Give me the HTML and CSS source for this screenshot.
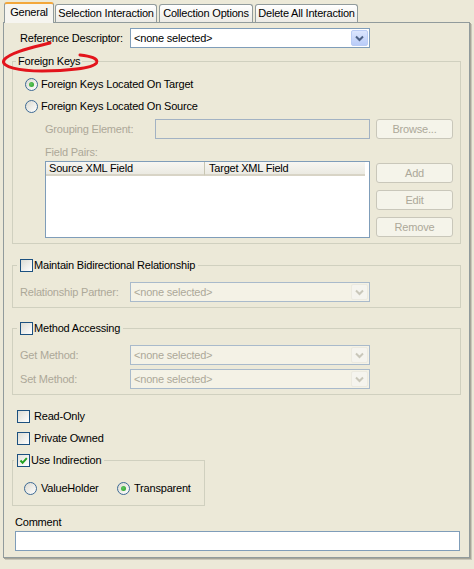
FILE: index.html
```html
<!DOCTYPE html>
<html>
<head>
<meta charset="utf-8">
<title>Mapping - General</title>
<link rel="stylesheet" href="styles.css">
</head>
<body>
<div class="window">
  <div class="tabs">
    <div class="tab active">General</div>
    <div class="tab t-sel">Selection Interaction</div>
    <div class="tab t-col">Collection Options</div>
    <div class="tab t-del">Delete All Interaction</div>
  </div>

  <div class="panel">
    <div class="ref-row">
      <span class="lbl w110">Reference Descriptor:</span>
      <div class="combo w240">
        <span class="val">&lt;none selected&gt;</span>
        <span class="drop"><svg viewBox="0 0 15 16" width="15" height="16"><path d="M4 6.5 L7.5 10 L11 6.5" fill="none" stroke="#4D6185" stroke-width="2"/></svg></span>
      </div>
    </div>

    <fieldset class="grp fk">
      <legend class="grp-title">Foreign Keys</legend>
      <div class="fk-body">
        <div class="opt"><span class="radio on"></span>Foreign Keys Located On Target</div>
        <div class="opt gap6"><span class="radio"></span>Foreign Keys Located On Source</div>
        <div class="fk-grid">
          <div class="grouping">
            <span class="lbl dis w110">Grouping Element:</span>
            <div class="field dis"></div>
          </div>
          <div class="btn dis">Browse...</div>
          <div class="pairs">
            <div class="lbl dis">Field Pairs:</div>
            <div class="table">
              <div class="thead">
                <div class="th c1">Source XML Field</div>
                <div class="th c2">Target XML Field</div>
              </div>
            </div>
          </div>
          <div class="btn-col">
            <div class="btn dis">Add</div>
            <div class="btn dis">Edit</div>
            <div class="btn dis">Remove</div>
          </div>
        </div>
      </div>
    </fieldset>

    <fieldset class="grp bidi">
      <legend class="chk-title"><span class="check"></span>Maintain Bidirectional Relationship</legend>
      <div class="sub-body">
        <div class="form-row">
          <span class="lbl dis w110">Relationship Partner:</span>
          <div class="combo dis w240">
            <span class="val">&lt;none selected&gt;</span>
            <span class="drop"><svg viewBox="0 0 15 16" width="15" height="16"><path d="M4 6.5 L7.5 10 L11 6.5" fill="none" stroke="#C9C7BA" stroke-width="2"/></svg></span>
          </div>
        </div>
      </div>
    </fieldset>

    <fieldset class="grp meth">
      <legend class="chk-title"><span class="check"></span>Method Accessing</legend>
      <div class="sub-body">
        <div class="form-row">
          <span class="lbl dis w110">Get Method:</span>
          <div class="combo dis w240">
            <span class="val">&lt;none selected&gt;</span>
            <span class="drop"><svg viewBox="0 0 15 16" width="15" height="16"><path d="M4 6.5 L7.5 10 L11 6.5" fill="none" stroke="#C9C7BA" stroke-width="2"/></svg></span>
          </div>
        </div>
        <div class="form-row gap4">
          <span class="lbl dis w110">Set Method:</span>
          <div class="combo dis w240">
            <span class="val">&lt;none selected&gt;</span>
            <span class="drop"><svg viewBox="0 0 15 16" width="15" height="16"><path d="M4 6.5 L7.5 10 L11 6.5" fill="none" stroke="#C9C7BA" stroke-width="2"/></svg></span>
          </div>
        </div>
      </div>
    </fieldset>

    <div class="chk-row first"><span class="check"></span>Read-Only</div>
    <div class="chk-row"><span class="check"></span>Private Owned</div>

    <fieldset class="grp indir">
      <legend class="chk-title"><span class="check on"><svg viewBox="0 0 11 11" width="11" height="11"><path d="M2.5 5.5 L4.6 7.8 L8.8 3.2" fill="none" stroke="#21A121" stroke-width="2"/></svg></span>Use Indirection</legend>
      <div class="indir-body">
        <div class="ropt w93"><span class="radio"></span>ValueHolder</div>
        <div class="ropt"><span class="radio on"></span>Transparent</div>
      </div>
    </fieldset>

    <div class="comment-lbl">Comment</div>
    <div class="comment-field"></div>
  </div>

  <svg class="annot" viewBox="0 0 110 80" width="110" height="80"><path d="M50 43 C 35 47, 10 52, 4 60 C 0 67, 20 71, 42 71 C 65 71, 93 68.5, 96.5 63 C 99 58.5, 90 56, 80 55" fill="none" stroke="#E3141C" stroke-width="3" stroke-linecap="round"/></svg>
</div>
</body>
</html>
```

FILE: styles.css
```css
* { box-sizing: border-box; }

html, body {
  margin: 0;
  padding: 0;
  background: #ECE9D8;
}

body {
  font-family: "Liberation Sans", Arial, sans-serif;
  font-size: 11px;
  line-height: 13px;
  letter-spacing: -0.2px;
  color: #000;
}

.window {
  position: relative;
  width: 474px;
  height: 569px;
  overflow: hidden;
}

/* Tabs */
.tabs {
  display: flex;
  align-items: flex-end;
  height: 22px;
  padding-left: 4px;
  gap: 2px;
  position: relative;
  z-index: 2;
}

.tab {
  height: 18px;
  border: 1px solid #919B9C;
  border-bottom: none;
  border-radius: 3px 3px 0 0;
  background: linear-gradient(#FFFFFF, #ECEBE5);
  line-height: 17px;
  text-align: center;
  white-space: nowrap;
}

.tab.active {
  width: 50px;
  height: 21px;
  margin-bottom: -1px;
  margin-right: -1px;
  border-top: 2px solid #F3A73A;
  background: #F6F5F0;
  line-height: 17px;
}

.t-sel { width: 102px; }
.t-col { width: 94px; }
.t-del { width: 103px; }

/* Panel */
.panel {
  margin-left: 3px;
  width: 467px;
  height: 536px;
  border: 1px solid #919B9C;
  box-shadow: 1px 1px 0 #A6A598, 2px 2px 0 #C9C7BA;
  padding: 5px 8px 0 8px;
  background: #ECE9D8;
}

.lbl { display: inline-block; white-space: nowrap; }
.lbl.dis { color: #ACA899; }
.w110 { width: 110px; flex: none; }
.w240 { width: 240px; }
.w93 { width: 93px; }

.ref-row {
  display: flex;
  align-items: center;
  height: 20px;
  padding-left: 8px;
}

/* Combo box */
.combo {
  display: flex;
  align-items: center;
  height: 20px;
  border: 1px solid #7F9DB9;
  background: #FFFFFF;
  padding: 0 1px 0 3px;
}
.combo .val { flex: 1; white-space: nowrap; }
.combo .drop {
  width: 17px;
  height: 16px;
  border: 1px solid #BACCF5;
  border-radius: 2px;
  background: linear-gradient(#DCE6FE, #B9CCF8);
  display: flex;
  align-items: center;
  justify-content: center;
}
.combo .drop svg { display: block; }
.combo.dis {
  border-color: #A9BACB;
  background: #F4F2E6;
  color: #ACA899;
}
.combo.dis .drop {
  border-color: #ECEAE0;
  background: #F5F4EE;
}

/* Group boxes */
.grp {
  margin: 0;
  padding: 0;
  border: 1px solid #D0D0BF;
  min-width: 0;
}

.grp-title {
  margin-left: 3px;
  padding: 0 2px;
  line-height: 14px;
}

.chk-title {
  display: flex;
  align-items: center;
  height: 14px;
  margin-left: 4px;
  padding: 0 3px 0 3px;
}
.chk-title .check { margin-right: 1px; }

.fk { margin-top: 6px; }

.fk-body { padding: 8px 0 5px 12px; }

.opt {
  display: flex;
  align-items: center;
  height: 16px;
}
.opt .radio { margin-right: 3px; }
.gap6 { margin-top: 6px; }

.radio {
  display: inline-block;
  flex: none;
  width: 13px;
  height: 13px;
  border: 1px solid #3D6A95;
  border-radius: 50%;
  background: linear-gradient(135deg, #DCDAD0, #FFFFFF);
  position: relative;
}
.radio.on::after {
  content: "";
  position: absolute;
  left: 3px;
  top: 3px;
  width: 5px;
  height: 5px;
  border-radius: 50%;
  background: radial-gradient(circle at 40% 40%, #62C462, #21A121);
}

.check {
  display: inline-flex;
  align-items: center;
  justify-content: center;
  flex: none;
  width: 13px;
  height: 13px;
  border: 1px solid #1C5180;
  background: linear-gradient(135deg, #DCDCD4, #FFFFFF);
}
.check.on { background: linear-gradient(135deg, #E4E3DC, #FFFFFF); }
.check svg { display: block; }

.fk-grid {
  margin: 5px 0 0 20px;
  display: grid;
  grid-template-columns: 325px 77px;
  column-gap: 6px;
  row-gap: 7px;
}

.grouping {
  display: flex;
  align-items: center;
  height: 20px;
}

.field.dis {
  width: 215px;
  height: 20px;
  border: 1px solid #A2B2C3;
  background: #ECE9D8;
}

.btn {
  height: 20px;
  border: 1px solid #C9C7BA;
  border-radius: 3px;
  background: #F5F4EA;
  text-align: center;
  line-height: 18px;
}
.btn.dis { color: #ACA899; }

.pairs .lbl { display: block; line-height: 13px; }

.table {
  margin-top: 2px;
  height: 77px;
  border: 1px solid #7F9DB9;
  background: #FFFFFF;
}

.thead {
  display: flex;
  height: 14px;
}
.th {
  height: 14px;
  line-height: 13px;
  background: linear-gradient(#F7F6F2, #EBEAE2);
  border-bottom: 2px solid #D8D4C6;
  white-space: nowrap;
}
.th.c1 {
  width: 159px;
  padding-left: 3px;
  border-right: 1px solid #C7C5B2;
}
.th.c2 {
  width: 160px;
  padding-left: 4px;
}

.btn-col {
  padding-top: 17px;
  display: flex;
  flex-direction: column;
  gap: 7px;
}

/* Sub groups */
.bidi { margin-top: 14px; }
.meth { margin-top: 13px; }

.sub-body { padding: 10px 0 5px 7px; }

.form-row {
  display: flex;
  align-items: center;
  height: 20px;
}
.gap4 { margin-top: 4px; }

/* Checkbox rows */
.chk-row {
  display: flex;
  align-items: center;
  height: 16px;
  padding-left: 5px;
  margin-top: 6px;
}
.chk-row.first { margin-top: 13px; }
.chk-row .check { margin-right: 4px; }

.indir {
  width: 193px;
  margin-top: 7px;
}
.indir .chk-title { margin-left: 1px; }

.indir-body {
  display: flex;
  align-items: center;
  height: 38px;
  padding: 13px 0 9px 11px;
}
.ropt {
  display: flex;
  align-items: center;
  height: 16px;
}
.ropt .radio { margin-right: 4px; }

.comment-lbl {
  margin-top: 10px;
  padding-left: 3px;
}
.comment-field {
  margin: 2px 0 0 3px;
  width: 445px;
  height: 20px;
  border: 1px solid #7F9DB9;
  background: #FFFFFF;
}

/* Red annotation ellipse drawn over the Foreign Keys title */
.annot {
  position: absolute;
  left: 0;
  top: 0;
  pointer-events: none;
  z-index: 3;
}
```
